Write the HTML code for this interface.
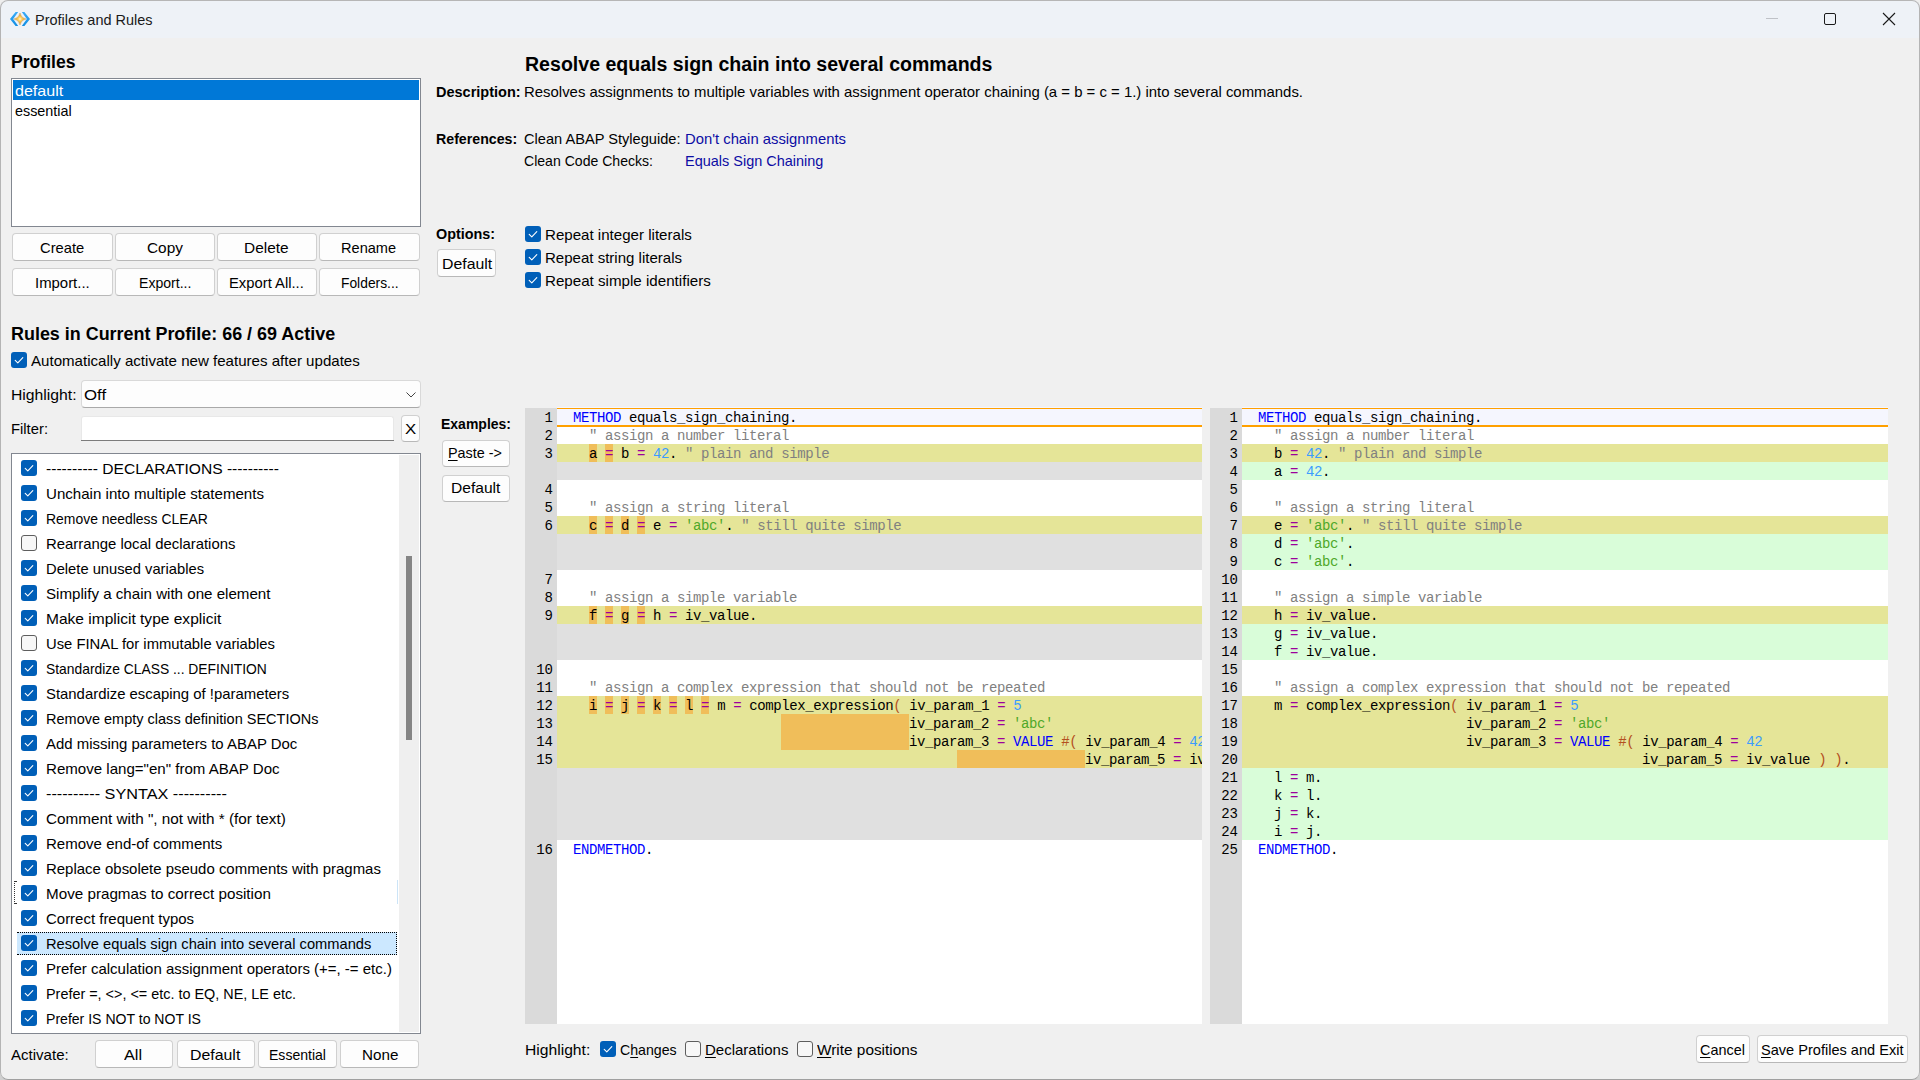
<!DOCTYPE html><html><head><meta charset="utf-8"><title>Profiles and Rules</title><style>
*{margin:0;padding:0;box-sizing:border-box}
html,body{width:1920px;height:1080px;overflow:hidden;background:linear-gradient(#eeeeee 0,#eeeeee 540px,#d0d0d0 540px)}
#win{position:absolute;left:0;top:0;width:1920px;height:1080px;border-radius:8px;overflow:hidden;background:#f0f0f0}
body{position:relative;font-family:"Liberation Sans", sans-serif;font-size:15px;color:#000}
.t{position:absolute;white-space:pre;line-height:20px}
.m{position:absolute;white-space:pre;line-height:20px;font-family:"Liberation Mono", monospace;font-size:14px;letter-spacing:-0.4px}
.btn{position:absolute;background:#fdfdfd;border:1px solid #d0d0d0;border-bottom-color:#b8b8b8;border-radius:4px}
.cb{position:absolute;width:16px;height:16px;border-radius:3px}
.cb.on{background:#005fb8}
.cb.off{background:#f7f7f7;border:1px solid #5e5e5e}
u{text-decoration:underline;text-underline-offset:2px}
</style></head><body>
<div id="win">
<div style="position:absolute;left:0px;top:0px;width:1920px;height:38px;background:#eef2f7;"></div>
<svg width="40" height="40" viewBox="0 0 40 40" style="position:absolute;left:0;top:0">
<defs><linearGradient id="chv" x1="0" y1="0" x2="0" y2="1"><stop offset="0" stop-color="#3aabf8"/><stop offset="1" stop-color="#128ee2"/></linearGradient>
<radialGradient id="star" cx="0.5" cy="0.5" r="0.5"><stop offset="0" stop-color="#fff8e0"/><stop offset="0.3" stop-color="#ffd060"/><stop offset="0.75" stop-color="#e8a020"/><stop offset="1" stop-color="#a87838"/></radialGradient></defs>
<polygon points="15.6,12 18.2,12 13.2,19 18.2,26 15.6,26 10,19" fill="url(#chv)"/>
<polygon points="24.4,12 21.8,12 26.8,19 21.8,26 24.4,26 30,19" fill="url(#chv)"/>
<path d="M20 13 Q21 18 26 19 Q21 20 20 25 Q19 20 14 19 Q19 18 20 13 Z" fill="url(#star)" stroke="#b98a3e" stroke-width="0.5" stroke-opacity="0.7"/>
</svg>
<div class="t " style="left:34.5px;top:10px;color:#1a1a1a;transform:scaleX(0.966);transform-origin:0 0;">Profiles and Rules</div>
<div style="position:absolute;left:1766px;top:18px;width:12px;height:1px;background:#bfc2c7;"></div>
<div style="position:absolute;left:1824px;top:13px;width:12px;height:12px;border:1.2px solid #1a1a1a;border-radius:2px;"></div>
<svg width="14" height="14" viewBox="0 0 14 14" style="position:absolute;left:1882px;top:12px"><path d="M1 1 L13 13 M13 1 L1 13" stroke="#1a1a1a" stroke-width="1.1"/></svg>
<div class="t " style="left:11px;top:52px;font-size:18px;font-weight:bold;transform:scaleX(0.9768);transform-origin:0 0;">Profiles</div>
<div style="position:absolute;left:11px;top:78px;width:410px;height:149px;background:#fff;border:1px solid #828790;"></div>
<div style="position:absolute;left:13px;top:80px;width:406px;height:20px;background:#0078d7;"></div>
<div class="t " style="left:14.5px;top:81px;color:#fff;transform:scaleX(1.07);transform-origin:0 0;">default</div>
<div class="t " style="left:14.5px;top:101px;transform:scaleX(0.9577);transform-origin:0 0;">essential</div>
<div class="btn" style="left:12px;top:233px;width:101px;height:28px"></div>
<div class="t " style="left:39.8px;top:238px;transform:scaleX(0.9838);transform-origin:0 0;">Create</div>
<div class="btn" style="left:115px;top:233px;width:100px;height:28px"></div>
<div class="t " style="left:146.8px;top:238px;transform:scaleX(1.0248);transform-origin:0 0;">Copy</div>
<div class="btn" style="left:217px;top:233px;width:100px;height:28px"></div>
<div class="t " style="left:244.2px;top:238px;transform:scaleX(1.0286);transform-origin:0 0;">Delete</div>
<div class="btn" style="left:319px;top:233px;width:101px;height:28px"></div>
<div class="t " style="left:341.2px;top:238px;transform:scaleX(0.9717);transform-origin:0 0;">Rename</div>
<div class="btn" style="left:12px;top:268px;width:101px;height:28px"></div>
<div class="t " style="left:34.5px;top:273px;transform:scaleX(0.9943);transform-origin:0 0;">Import...</div>
<div class="btn" style="left:115px;top:268px;width:100px;height:28px"></div>
<div class="t " style="left:138.8px;top:273px;transform:scaleX(0.9381);transform-origin:0 0;">Export...</div>
<div class="btn" style="left:217px;top:268px;width:100px;height:28px"></div>
<div class="t " style="left:229.3px;top:273px;transform:scaleX(0.9858);transform-origin:0 0;">Export All...</div>
<div class="btn" style="left:319px;top:268px;width:101px;height:28px"></div>
<div class="t " style="left:340.5px;top:273px;transform:scaleX(0.9211);transform-origin:0 0;">Folders...</div>
<div class="t " style="left:11px;top:324px;font-size:18px;font-weight:bold;transform:scaleX(0.9959);transform-origin:0 0;">Rules in Current Profile: 66 / 69 Active</div>
<div class="cb on" style="left:11px;top:352px"><svg width="16" height="16" viewBox="0 0 16 16" style="position:absolute;left:0;top:0"><path d="M4.2 8.3 L6.8 10.8 L11.8 5.6" fill="none" stroke="#fff" stroke-width="1.1" stroke-linecap="round" stroke-linejoin="round"/></svg></div>
<div class="t " style="left:30.5px;top:351px;transform:scaleX(1.006);transform-origin:0 0;">Automatically activate new features after updates</div>
<div class="t " style="left:10.5px;top:385px;transform:scaleX(1.0488);transform-origin:0 0;">Highlight:</div>
<div style="position:absolute;left:81px;top:380px;width:340px;height:28px;background:#fdfdfd;border:1px solid #d9d9d9;border-bottom-color:#a9a9a9;border-radius:4px;"></div>
<div class="t " style="left:84.3px;top:385px;transform:scaleX(1.1199);transform-origin:0 0;">Off</div>
<svg width="12" height="8" viewBox="0 0 12 8" style="position:absolute;left:405px;top:391px"><path d="M1.5 1.5 L6 6 L10.5 1.5" fill="none" stroke="#444" stroke-width="1"/></svg>
<div class="t " style="left:10.5px;top:419px;transform:scaleX(0.9867);transform-origin:0 0;">Filter:</div>
<div style="position:absolute;left:81px;top:416px;width:313px;height:25px;background:#fff;border:1px solid #e8e8e8;border-bottom:none;border-radius:3px 3px 0 0;"></div>
<div style="position:absolute;left:81px;top:440px;width:313px;height:1px;background:#7c7c7c;"></div>
<div class="btn" style="left:401px;top:415px;width:19px;height:27px"></div>
<div class="t " style="left:404.6px;top:419px;transform:scaleX(1.1183);transform-origin:0 0;">X</div>
<div style="position:absolute;left:11px;top:453px;width:410px;height:581px;background:#fff;border:1px solid #828790;"></div>
<div style="position:absolute;left:399px;top:455px;width:20px;height:577px;background:#efefef;"></div>
<div style="position:absolute;left:406px;top:556px;width:6px;height:184px;background:#858585;"></div>
<div style="position:absolute;left:17px;top:932px;width:380px;height:23px;background:#cce8ff;border:1px dotted #000;border-left:none;"></div>
<div style="position:absolute;left:14px;top:881px;width:2px;height:23px;border-left:1px dotted #333;border-top:1px dotted #333;border-bottom:1px dotted #333;"></div>
<div style="position:absolute;left:397px;top:880px;width:1px;height:24px;background:#cce4f7;"></div>
<div class="cb on" style="left:21px;top:460px"><svg width="16" height="16" viewBox="0 0 16 16" style="position:absolute;left:0;top:0"><path d="M4.2 8.3 L6.8 10.8 L11.8 5.6" fill="none" stroke="#fff" stroke-width="1.1" stroke-linecap="round" stroke-linejoin="round"/></svg></div>
<div class="t " style="left:46px;top:459px;transform:scaleX(1.0405);transform-origin:0 0;">---------- DECLARATIONS ----------</div>
<div class="cb on" style="left:21px;top:485px"><svg width="16" height="16" viewBox="0 0 16 16" style="position:absolute;left:0;top:0"><path d="M4.2 8.3 L6.8 10.8 L11.8 5.6" fill="none" stroke="#fff" stroke-width="1.1" stroke-linecap="round" stroke-linejoin="round"/></svg></div>
<div class="t " style="left:46px;top:484px;transform:scaleX(1.0056);transform-origin:0 0;">Unchain into multiple statements</div>
<div class="cb on" style="left:21px;top:510px"><svg width="16" height="16" viewBox="0 0 16 16" style="position:absolute;left:0;top:0"><path d="M4.2 8.3 L6.8 10.8 L11.8 5.6" fill="none" stroke="#fff" stroke-width="1.1" stroke-linecap="round" stroke-linejoin="round"/></svg></div>
<div class="t " style="left:46px;top:509px;transform:scaleX(0.929);transform-origin:0 0;">Remove needless CLEAR</div>
<div class="cb off" style="left:21px;top:535px"></div>
<div class="t " style="left:46px;top:534px;transform:scaleX(0.9919);transform-origin:0 0;">Rearrange local declarations</div>
<div class="cb on" style="left:21px;top:560px"><svg width="16" height="16" viewBox="0 0 16 16" style="position:absolute;left:0;top:0"><path d="M4.2 8.3 L6.8 10.8 L11.8 5.6" fill="none" stroke="#fff" stroke-width="1.1" stroke-linecap="round" stroke-linejoin="round"/></svg></div>
<div class="t " style="left:46px;top:559px;transform:scaleX(0.9817);transform-origin:0 0;">Delete unused variables</div>
<div class="cb on" style="left:21px;top:585px"><svg width="16" height="16" viewBox="0 0 16 16" style="position:absolute;left:0;top:0"><path d="M4.2 8.3 L6.8 10.8 L11.8 5.6" fill="none" stroke="#fff" stroke-width="1.1" stroke-linecap="round" stroke-linejoin="round"/></svg></div>
<div class="t " style="left:46px;top:584px;transform:scaleX(1.0084);transform-origin:0 0;">Simplify a chain with one element</div>
<div class="cb on" style="left:21px;top:610px"><svg width="16" height="16" viewBox="0 0 16 16" style="position:absolute;left:0;top:0"><path d="M4.2 8.3 L6.8 10.8 L11.8 5.6" fill="none" stroke="#fff" stroke-width="1.1" stroke-linecap="round" stroke-linejoin="round"/></svg></div>
<div class="t " style="left:46px;top:609px;transform:scaleX(1.0353);transform-origin:0 0;">Make implicit type explicit</div>
<div class="cb off" style="left:21px;top:635px"></div>
<div class="t " style="left:46px;top:634px;transform:scaleX(0.9869);transform-origin:0 0;">Use FINAL for immutable variables</div>
<div class="cb on" style="left:21px;top:660px"><svg width="16" height="16" viewBox="0 0 16 16" style="position:absolute;left:0;top:0"><path d="M4.2 8.3 L6.8 10.8 L11.8 5.6" fill="none" stroke="#fff" stroke-width="1.1" stroke-linecap="round" stroke-linejoin="round"/></svg></div>
<div class="t " style="left:46px;top:659px;transform:scaleX(0.9229);transform-origin:0 0;">Standardize CLASS ... DEFINITION</div>
<div class="cb on" style="left:21px;top:685px"><svg width="16" height="16" viewBox="0 0 16 16" style="position:absolute;left:0;top:0"><path d="M4.2 8.3 L6.8 10.8 L11.8 5.6" fill="none" stroke="#fff" stroke-width="1.1" stroke-linecap="round" stroke-linejoin="round"/></svg></div>
<div class="t " style="left:46px;top:684px;transform:scaleX(0.9922);transform-origin:0 0;">Standardize escaping of !parameters</div>
<div class="cb on" style="left:21px;top:710px"><svg width="16" height="16" viewBox="0 0 16 16" style="position:absolute;left:0;top:0"><path d="M4.2 8.3 L6.8 10.8 L11.8 5.6" fill="none" stroke="#fff" stroke-width="1.1" stroke-linecap="round" stroke-linejoin="round"/></svg></div>
<div class="t " style="left:46px;top:709px;transform:scaleX(0.9671);transform-origin:0 0;">Remove empty class definition SECTIONs</div>
<div class="cb on" style="left:21px;top:735px"><svg width="16" height="16" viewBox="0 0 16 16" style="position:absolute;left:0;top:0"><path d="M4.2 8.3 L6.8 10.8 L11.8 5.6" fill="none" stroke="#fff" stroke-width="1.1" stroke-linecap="round" stroke-linejoin="round"/></svg></div>
<div class="t " style="left:46px;top:734px;transform:scaleX(0.9959);transform-origin:0 0;">Add missing parameters to ABAP Doc</div>
<div class="cb on" style="left:21px;top:760px"><svg width="16" height="16" viewBox="0 0 16 16" style="position:absolute;left:0;top:0"><path d="M4.2 8.3 L6.8 10.8 L11.8 5.6" fill="none" stroke="#fff" stroke-width="1.1" stroke-linecap="round" stroke-linejoin="round"/></svg></div>
<div class="t " style="left:46px;top:759px;transform:scaleX(1.0044);transform-origin:0 0;">Remove lang="en" from ABAP Doc</div>
<div class="cb on" style="left:21px;top:785px"><svg width="16" height="16" viewBox="0 0 16 16" style="position:absolute;left:0;top:0"><path d="M4.2 8.3 L6.8 10.8 L11.8 5.6" fill="none" stroke="#fff" stroke-width="1.1" stroke-linecap="round" stroke-linejoin="round"/></svg></div>
<div class="t " style="left:46px;top:784px;transform:scaleX(1.0823);transform-origin:0 0;">---------- SYNTAX ----------</div>
<div class="cb on" style="left:21px;top:810px"><svg width="16" height="16" viewBox="0 0 16 16" style="position:absolute;left:0;top:0"><path d="M4.2 8.3 L6.8 10.8 L11.8 5.6" fill="none" stroke="#fff" stroke-width="1.1" stroke-linecap="round" stroke-linejoin="round"/></svg></div>
<div class="t " style="left:46px;top:809px;transform:scaleX(1.0187);transform-origin:0 0;">Comment with ", not with * (for text)</div>
<div class="cb on" style="left:21px;top:835px"><svg width="16" height="16" viewBox="0 0 16 16" style="position:absolute;left:0;top:0"><path d="M4.2 8.3 L6.8 10.8 L11.8 5.6" fill="none" stroke="#fff" stroke-width="1.1" stroke-linecap="round" stroke-linejoin="round"/></svg></div>
<div class="t " style="left:46px;top:834px;transform:scaleX(1.0022);transform-origin:0 0;">Remove end-of comments</div>
<div class="cb on" style="left:21px;top:860px"><svg width="16" height="16" viewBox="0 0 16 16" style="position:absolute;left:0;top:0"><path d="M4.2 8.3 L6.8 10.8 L11.8 5.6" fill="none" stroke="#fff" stroke-width="1.1" stroke-linecap="round" stroke-linejoin="round"/></svg></div>
<div class="t " style="left:46px;top:859px;transform:scaleX(0.9967);transform-origin:0 0;">Replace obsolete pseudo comments with pragmas</div>
<div class="cb on" style="left:21px;top:885px"><svg width="16" height="16" viewBox="0 0 16 16" style="position:absolute;left:0;top:0"><path d="M4.2 8.3 L6.8 10.8 L11.8 5.6" fill="none" stroke="#fff" stroke-width="1.1" stroke-linecap="round" stroke-linejoin="round"/></svg></div>
<div class="t " style="left:46px;top:884px;transform:scaleX(1.0141);transform-origin:0 0;">Move pragmas to correct position</div>
<div class="cb on" style="left:21px;top:910px"><svg width="16" height="16" viewBox="0 0 16 16" style="position:absolute;left:0;top:0"><path d="M4.2 8.3 L6.8 10.8 L11.8 5.6" fill="none" stroke="#fff" stroke-width="1.1" stroke-linecap="round" stroke-linejoin="round"/></svg></div>
<div class="t " style="left:46px;top:909px;transform:scaleX(0.9979);transform-origin:0 0;">Correct frequent typos</div>
<div class="cb on" style="left:21px;top:935px"><svg width="16" height="16" viewBox="0 0 16 16" style="position:absolute;left:0;top:0"><path d="M4.2 8.3 L6.8 10.8 L11.8 5.6" fill="none" stroke="#fff" stroke-width="1.1" stroke-linecap="round" stroke-linejoin="round"/></svg></div>
<div class="t " style="left:46px;top:934px;transform:scaleX(0.9778);transform-origin:0 0;">Resolve equals sign chain into several commands</div>
<div class="cb on" style="left:21px;top:960px"><svg width="16" height="16" viewBox="0 0 16 16" style="position:absolute;left:0;top:0"><path d="M4.2 8.3 L6.8 10.8 L11.8 5.6" fill="none" stroke="#fff" stroke-width="1.1" stroke-linecap="round" stroke-linejoin="round"/></svg></div>
<div class="t " style="left:46px;top:959px;transform:scaleX(0.9985);transform-origin:0 0;">Prefer calculation assignment operators (+=, -= etc.)</div>
<div class="cb on" style="left:21px;top:985px"><svg width="16" height="16" viewBox="0 0 16 16" style="position:absolute;left:0;top:0"><path d="M4.2 8.3 L6.8 10.8 L11.8 5.6" fill="none" stroke="#fff" stroke-width="1.1" stroke-linecap="round" stroke-linejoin="round"/></svg></div>
<div class="t " style="left:46px;top:984px;transform:scaleX(0.9599);transform-origin:0 0;">Prefer =, &lt;&gt;, &lt;= etc. to EQ, NE, LE etc.</div>
<div class="cb on" style="left:21px;top:1010px"><svg width="16" height="16" viewBox="0 0 16 16" style="position:absolute;left:0;top:0"><path d="M4.2 8.3 L6.8 10.8 L11.8 5.6" fill="none" stroke="#fff" stroke-width="1.1" stroke-linecap="round" stroke-linejoin="round"/></svg></div>
<div class="t " style="left:46px;top:1009px;transform:scaleX(0.9375);transform-origin:0 0;">Prefer IS NOT to NOT IS</div>
<div class="t " style="left:10.5px;top:1045px;transform:scaleX(1.0029);transform-origin:0 0;">Activate:</div>
<div class="btn" style="left:95px;top:1040px;width:78px;height:28px"></div>
<div class="t " style="left:124.4px;top:1045px;transform:scaleX(1.0857);transform-origin:0 0;">All</div>
<div class="btn" style="left:177px;top:1040px;width:78px;height:28px"></div>
<div class="t " style="left:190.2px;top:1045px;transform:scaleX(1.0583);transform-origin:0 0;">Default</div>
<div class="btn" style="left:258px;top:1040px;width:79px;height:28px"></div>
<div class="t " style="left:268.5px;top:1045px;transform:scaleX(0.9363);transform-origin:0 0;">Essential</div>
<div class="btn" style="left:340px;top:1040px;width:79px;height:28px"></div>
<div class="t " style="left:361.7px;top:1045px;transform:scaleX(1.0151);transform-origin:0 0;">None</div>
<div class="t " style="left:525px;top:54px;font-size:19.5px;font-weight:bold;transform:scaleX(1.003);transform-origin:0 0;">Resolve equals sign chain into several commands</div>
<div class="t " style="left:435.5px;top:82px;font-weight:bold;transform:scaleX(0.9667);transform-origin:0 0;">Description:</div>
<div class="t " style="left:524px;top:82px;transform:scaleX(0.9945);transform-origin:0 0;">Resolves assignments to multiple variables with assignment operator chaining (a = b = c = 1.) into several commands.</div>
<div class="t " style="left:435.5px;top:129px;font-weight:bold;transform:scaleX(0.946);transform-origin:0 0;">References:</div>
<div class="t " style="left:524.3px;top:129px;transform:scaleX(0.974);transform-origin:0 0;">Clean ABAP Styleguide:</div>
<div class="t " style="left:684.6px;top:129px;color:#0c0ca4;transform:scaleX(0.9874);transform-origin:0 0;">Don't chain assignments</div>
<div class="t " style="left:524.3px;top:151px;transform:scaleX(0.9376);transform-origin:0 0;">Clean Code Checks:</div>
<div class="t " style="left:684.6px;top:151px;color:#0c0ca4;transform:scaleX(0.9649);transform-origin:0 0;">Equals Sign Chaining</div>
<div class="t " style="left:436px;top:224px;font-weight:bold;transform:scaleX(0.9585);transform-origin:0 0;">Options:</div>
<div class="btn" style="left:437px;top:249px;width:59px;height:28px"></div>
<div class="t " style="left:441.5px;top:254px;transform:scaleX(1.0572);transform-origin:0 0;">Default</div>
<div class="cb on" style="left:525px;top:226px"><svg width="16" height="16" viewBox="0 0 16 16" style="position:absolute;left:0;top:0"><path d="M4.2 8.3 L6.8 10.8 L11.8 5.6" fill="none" stroke="#fff" stroke-width="1.1" stroke-linecap="round" stroke-linejoin="round"/></svg></div>
<div class="t " style="left:544.5px;top:225px;transform:scaleX(1.006);transform-origin:0 0;">Repeat integer literals</div>
<div class="cb on" style="left:525px;top:249px"><svg width="16" height="16" viewBox="0 0 16 16" style="position:absolute;left:0;top:0"><path d="M4.2 8.3 L6.8 10.8 L11.8 5.6" fill="none" stroke="#fff" stroke-width="1.1" stroke-linecap="round" stroke-linejoin="round"/></svg></div>
<div class="t " style="left:544.5px;top:248px;transform:scaleX(1.0019);transform-origin:0 0;">Repeat string literals</div>
<div class="cb on" style="left:525px;top:272px"><svg width="16" height="16" viewBox="0 0 16 16" style="position:absolute;left:0;top:0"><path d="M4.2 8.3 L6.8 10.8 L11.8 5.6" fill="none" stroke="#fff" stroke-width="1.1" stroke-linecap="round" stroke-linejoin="round"/></svg></div>
<div class="t " style="left:544.5px;top:271px;transform:scaleX(1.0094);transform-origin:0 0;">Repeat simple identifiers</div>
<div class="t " style="left:440.8px;top:414px;font-weight:bold;transform:scaleX(0.9328);transform-origin:0 0;">Examples:</div>
<div class="btn" style="left:442px;top:440px;width:68px;height:27px"></div>
<div class="t " style="left:448.4px;top:443px;transform:scaleX(0.9592);transform-origin:0 0;"><u>P</u>aste -&gt;</div>
<div class="btn" style="left:442px;top:475px;width:68px;height:27px"></div>
<div class="t " style="left:451px;top:478px;transform:scaleX(1.0393);transform-origin:0 0;">Default</div>
<div style="position:absolute;left:0;top:0;width:1202px;height:1080px;overflow:hidden">
<div style="position:absolute;left:525px;top:408px;width:677px;height:616px;background:#fff;"></div>
<div style="position:absolute;left:525px;top:408px;width:32px;height:616px;background:#dadada;"></div>
<div style="position:absolute;left:557px;top:407px;width:645px;height:19px;background:#f5f6fe;"></div>
<div style="position:absolute;left:557px;top:444px;width:645px;height:18px;background:#e5e598;"></div>
<div style="position:absolute;left:557px;top:462px;width:645px;height:18px;background:#e0e0e0;"></div>
<div style="position:absolute;left:557px;top:516px;width:645px;height:18px;background:#e5e598;"></div>
<div style="position:absolute;left:557px;top:534px;width:645px;height:18px;background:#e0e0e0;"></div>
<div style="position:absolute;left:557px;top:552px;width:645px;height:18px;background:#e0e0e0;"></div>
<div style="position:absolute;left:557px;top:606px;width:645px;height:18px;background:#e5e598;"></div>
<div style="position:absolute;left:557px;top:624px;width:645px;height:18px;background:#e0e0e0;"></div>
<div style="position:absolute;left:557px;top:642px;width:645px;height:18px;background:#e0e0e0;"></div>
<div style="position:absolute;left:557px;top:696px;width:645px;height:18px;background:#e5e598;"></div>
<div style="position:absolute;left:557px;top:714px;width:645px;height:18px;background:#e5e598;"></div>
<div style="position:absolute;left:557px;top:732px;width:645px;height:18px;background:#e5e598;"></div>
<div style="position:absolute;left:557px;top:750px;width:645px;height:18px;background:#e5e598;"></div>
<div style="position:absolute;left:557px;top:768px;width:645px;height:18px;background:#e0e0e0;"></div>
<div style="position:absolute;left:557px;top:786px;width:645px;height:18px;background:#e0e0e0;"></div>
<div style="position:absolute;left:557px;top:804px;width:645px;height:18px;background:#e0e0e0;"></div>
<div style="position:absolute;left:557px;top:822px;width:645px;height:18px;background:#e0e0e0;"></div>
<div style="position:absolute;left:589px;top:444px;width:8px;height:18px;background:#f0be5a;"></div>
<div style="position:absolute;left:605px;top:444px;width:8px;height:18px;background:#f0be5a;"></div>
<div style="position:absolute;left:589px;top:516px;width:8px;height:18px;background:#f0be5a;"></div>
<div style="position:absolute;left:605px;top:516px;width:8px;height:18px;background:#f0be5a;"></div>
<div style="position:absolute;left:621px;top:516px;width:8px;height:18px;background:#f0be5a;"></div>
<div style="position:absolute;left:637px;top:516px;width:8px;height:18px;background:#f0be5a;"></div>
<div style="position:absolute;left:589px;top:606px;width:8px;height:18px;background:#f0be5a;"></div>
<div style="position:absolute;left:605px;top:606px;width:8px;height:18px;background:#f0be5a;"></div>
<div style="position:absolute;left:621px;top:606px;width:8px;height:18px;background:#f0be5a;"></div>
<div style="position:absolute;left:637px;top:606px;width:8px;height:18px;background:#f0be5a;"></div>
<div style="position:absolute;left:589px;top:696px;width:8px;height:18px;background:#f0be5a;"></div>
<div style="position:absolute;left:605px;top:696px;width:8px;height:18px;background:#f0be5a;"></div>
<div style="position:absolute;left:621px;top:696px;width:8px;height:18px;background:#f0be5a;"></div>
<div style="position:absolute;left:637px;top:696px;width:8px;height:18px;background:#f0be5a;"></div>
<div style="position:absolute;left:653px;top:696px;width:8px;height:18px;background:#f0be5a;"></div>
<div style="position:absolute;left:669px;top:696px;width:8px;height:18px;background:#f0be5a;"></div>
<div style="position:absolute;left:685px;top:696px;width:8px;height:18px;background:#f0be5a;"></div>
<div style="position:absolute;left:701px;top:696px;width:8px;height:18px;background:#f0be5a;"></div>
<div style="position:absolute;left:781px;top:714px;width:128px;height:36px;background:#f0be5a;"></div>
<div style="position:absolute;left:957px;top:750px;width:128px;height:18px;background:#f0be5a;"></div>
<div class="m" style="left:525px;top:408px;width:28px;text-align:right;letter-spacing:0;">1</div>
<div class="m" style="left:573px;top:408px;"><span style="color:#0000ff">METHOD</span> equals_sign_chaining.</div>
<div class="m" style="left:525px;top:426px;width:28px;text-align:right;letter-spacing:0;">2</div>
<div class="m" style="left:573px;top:426px;">  <span style="color:#808080">" assign a number literal</span></div>
<div class="m" style="left:525px;top:444px;width:28px;text-align:right;letter-spacing:0;">3</div>
<div class="m" style="left:573px;top:444px;">  a <span style="color:#9c009c">=</span> b <span style="color:#9c009c">=</span> <span style="color:#3c9cff">42</span>. <span style="color:#808080">" plain and simple</span></div>
<div class="m" style="left:525px;top:480px;width:28px;text-align:right;letter-spacing:0;">4</div>
<div class="m" style="left:525px;top:498px;width:28px;text-align:right;letter-spacing:0;">5</div>
<div class="m" style="left:573px;top:498px;">  <span style="color:#808080">" assign a string literal</span></div>
<div class="m" style="left:525px;top:516px;width:28px;text-align:right;letter-spacing:0;">6</div>
<div class="m" style="left:573px;top:516px;">  c <span style="color:#9c009c">=</span> d <span style="color:#9c009c">=</span> e <span style="color:#9c009c">=</span> <span style="color:#4fa82a">'abc'</span>. <span style="color:#808080">" still quite simple</span></div>
<div class="m" style="left:525px;top:570px;width:28px;text-align:right;letter-spacing:0;">7</div>
<div class="m" style="left:525px;top:588px;width:28px;text-align:right;letter-spacing:0;">8</div>
<div class="m" style="left:573px;top:588px;">  <span style="color:#808080">" assign a simple variable</span></div>
<div class="m" style="left:525px;top:606px;width:28px;text-align:right;letter-spacing:0;">9</div>
<div class="m" style="left:573px;top:606px;">  f <span style="color:#9c009c">=</span> g <span style="color:#9c009c">=</span> h <span style="color:#9c009c">=</span> iv_value.</div>
<div class="m" style="left:525px;top:660px;width:28px;text-align:right;letter-spacing:0;">10</div>
<div class="m" style="left:525px;top:678px;width:28px;text-align:right;letter-spacing:0;">11</div>
<div class="m" style="left:573px;top:678px;">  <span style="color:#808080">" assign a complex expression that should not be repeated</span></div>
<div class="m" style="left:525px;top:696px;width:28px;text-align:right;letter-spacing:0;">12</div>
<div class="m" style="left:573px;top:696px;">  i <span style="color:#9c009c">=</span> j <span style="color:#9c009c">=</span> k <span style="color:#9c009c">=</span> l <span style="color:#9c009c">=</span> m <span style="color:#9c009c">=</span> complex_expression<span style="color:#b4501e">(</span> iv_param_1 <span style="color:#9c009c">=</span> <span style="color:#3c9cff">5</span></div>
<div class="m" style="left:525px;top:714px;width:28px;text-align:right;letter-spacing:0;">13</div>
<div class="m" style="left:573px;top:714px;">                                          iv_param_2 <span style="color:#9c009c">=</span> <span style="color:#4fa82a">'abc'</span></div>
<div class="m" style="left:525px;top:732px;width:28px;text-align:right;letter-spacing:0;">14</div>
<div class="m" style="left:573px;top:732px;">                                          iv_param_3 <span style="color:#9c009c">=</span> <span style="color:#0000ff">VALUE</span> <span style="color:#b4501e">#</span><span style="color:#b4501e">(</span> iv_param_4 <span style="color:#9c009c">=</span> <span style="color:#3c9cff">42</span></div>
<div class="m" style="left:525px;top:750px;width:28px;text-align:right;letter-spacing:0;">15</div>
<div class="m" style="left:573px;top:750px;">                                                                iv_param_5 <span style="color:#9c009c">=</span> iv_value <span style="color:#b4501e">)</span> <span style="color:#b4501e">)</span>.</div>
<div class="m" style="left:525px;top:840px;width:28px;text-align:right;letter-spacing:0;">16</div>
<div class="m" style="left:573px;top:840px;"><span style="color:#0000ff">ENDMETHOD</span>.</div>
<div style="position:absolute;left:557px;top:408px;width:645px;height:1px;background:#ffa000;"></div>
<div style="position:absolute;left:557px;top:425px;width:645px;height:2px;background:#ffa000;"></div>
</div>
<div style="position:absolute;left:0;top:0;width:1888px;height:1080px;overflow:hidden">
<div style="position:absolute;left:1210px;top:408px;width:678px;height:616px;background:#fff;"></div>
<div style="position:absolute;left:1210px;top:408px;width:32px;height:616px;background:#dadada;"></div>
<div style="position:absolute;left:1242px;top:407px;width:646px;height:19px;background:#f5f6fe;"></div>
<div style="position:absolute;left:1242px;top:444px;width:646px;height:18px;background:#e5e598;"></div>
<div style="position:absolute;left:1242px;top:462px;width:646px;height:18px;background:#d9fdd9;"></div>
<div style="position:absolute;left:1242px;top:516px;width:646px;height:18px;background:#e5e598;"></div>
<div style="position:absolute;left:1242px;top:534px;width:646px;height:18px;background:#d9fdd9;"></div>
<div style="position:absolute;left:1242px;top:552px;width:646px;height:18px;background:#d9fdd9;"></div>
<div style="position:absolute;left:1242px;top:606px;width:646px;height:18px;background:#e5e598;"></div>
<div style="position:absolute;left:1242px;top:624px;width:646px;height:18px;background:#d9fdd9;"></div>
<div style="position:absolute;left:1242px;top:642px;width:646px;height:18px;background:#d9fdd9;"></div>
<div style="position:absolute;left:1242px;top:696px;width:646px;height:18px;background:#e5e598;"></div>
<div style="position:absolute;left:1242px;top:714px;width:646px;height:18px;background:#e5e598;"></div>
<div style="position:absolute;left:1242px;top:732px;width:646px;height:18px;background:#e5e598;"></div>
<div style="position:absolute;left:1242px;top:750px;width:646px;height:18px;background:#e5e598;"></div>
<div style="position:absolute;left:1242px;top:768px;width:646px;height:18px;background:#d9fdd9;"></div>
<div style="position:absolute;left:1242px;top:786px;width:646px;height:18px;background:#d9fdd9;"></div>
<div style="position:absolute;left:1242px;top:804px;width:646px;height:18px;background:#d9fdd9;"></div>
<div style="position:absolute;left:1242px;top:822px;width:646px;height:18px;background:#d9fdd9;"></div>
<div class="m" style="left:1210px;top:408px;width:28px;text-align:right;letter-spacing:0;">1</div>
<div class="m" style="left:1258px;top:408px;"><span style="color:#0000ff">METHOD</span> equals_sign_chaining.</div>
<div class="m" style="left:1210px;top:426px;width:28px;text-align:right;letter-spacing:0;">2</div>
<div class="m" style="left:1258px;top:426px;">  <span style="color:#808080">" assign a number literal</span></div>
<div class="m" style="left:1210px;top:444px;width:28px;text-align:right;letter-spacing:0;">3</div>
<div class="m" style="left:1258px;top:444px;">  b <span style="color:#9c009c">=</span> <span style="color:#3c9cff">42</span>. <span style="color:#808080">" plain and simple</span></div>
<div class="m" style="left:1210px;top:462px;width:28px;text-align:right;letter-spacing:0;">4</div>
<div class="m" style="left:1258px;top:462px;">  a <span style="color:#9c009c">=</span> <span style="color:#3c9cff">42</span>.</div>
<div class="m" style="left:1210px;top:480px;width:28px;text-align:right;letter-spacing:0;">5</div>
<div class="m" style="left:1210px;top:498px;width:28px;text-align:right;letter-spacing:0;">6</div>
<div class="m" style="left:1258px;top:498px;">  <span style="color:#808080">" assign a string literal</span></div>
<div class="m" style="left:1210px;top:516px;width:28px;text-align:right;letter-spacing:0;">7</div>
<div class="m" style="left:1258px;top:516px;">  e <span style="color:#9c009c">=</span> <span style="color:#4fa82a">'abc'</span>. <span style="color:#808080">" still quite simple</span></div>
<div class="m" style="left:1210px;top:534px;width:28px;text-align:right;letter-spacing:0;">8</div>
<div class="m" style="left:1258px;top:534px;">  d <span style="color:#9c009c">=</span> <span style="color:#4fa82a">'abc'</span>.</div>
<div class="m" style="left:1210px;top:552px;width:28px;text-align:right;letter-spacing:0;">9</div>
<div class="m" style="left:1258px;top:552px;">  c <span style="color:#9c009c">=</span> <span style="color:#4fa82a">'abc'</span>.</div>
<div class="m" style="left:1210px;top:570px;width:28px;text-align:right;letter-spacing:0;">10</div>
<div class="m" style="left:1210px;top:588px;width:28px;text-align:right;letter-spacing:0;">11</div>
<div class="m" style="left:1258px;top:588px;">  <span style="color:#808080">" assign a simple variable</span></div>
<div class="m" style="left:1210px;top:606px;width:28px;text-align:right;letter-spacing:0;">12</div>
<div class="m" style="left:1258px;top:606px;">  h <span style="color:#9c009c">=</span> iv_value.</div>
<div class="m" style="left:1210px;top:624px;width:28px;text-align:right;letter-spacing:0;">13</div>
<div class="m" style="left:1258px;top:624px;">  g <span style="color:#9c009c">=</span> iv_value.</div>
<div class="m" style="left:1210px;top:642px;width:28px;text-align:right;letter-spacing:0;">14</div>
<div class="m" style="left:1258px;top:642px;">  f <span style="color:#9c009c">=</span> iv_value.</div>
<div class="m" style="left:1210px;top:660px;width:28px;text-align:right;letter-spacing:0;">15</div>
<div class="m" style="left:1210px;top:678px;width:28px;text-align:right;letter-spacing:0;">16</div>
<div class="m" style="left:1258px;top:678px;">  <span style="color:#808080">" assign a complex expression that should not be repeated</span></div>
<div class="m" style="left:1210px;top:696px;width:28px;text-align:right;letter-spacing:0;">17</div>
<div class="m" style="left:1258px;top:696px;">  m <span style="color:#9c009c">=</span> complex_expression<span style="color:#b4501e">(</span> iv_param_1 <span style="color:#9c009c">=</span> <span style="color:#3c9cff">5</span></div>
<div class="m" style="left:1210px;top:714px;width:28px;text-align:right;letter-spacing:0;">18</div>
<div class="m" style="left:1258px;top:714px;">                          iv_param_2 <span style="color:#9c009c">=</span> <span style="color:#4fa82a">'abc'</span></div>
<div class="m" style="left:1210px;top:732px;width:28px;text-align:right;letter-spacing:0;">19</div>
<div class="m" style="left:1258px;top:732px;">                          iv_param_3 <span style="color:#9c009c">=</span> <span style="color:#0000ff">VALUE</span> <span style="color:#b4501e">#</span><span style="color:#b4501e">(</span> iv_param_4 <span style="color:#9c009c">=</span> <span style="color:#3c9cff">42</span></div>
<div class="m" style="left:1210px;top:750px;width:28px;text-align:right;letter-spacing:0;">20</div>
<div class="m" style="left:1258px;top:750px;">                                                iv_param_5 <span style="color:#9c009c">=</span> iv_value <span style="color:#b4501e">)</span> <span style="color:#b4501e">)</span>.</div>
<div class="m" style="left:1210px;top:768px;width:28px;text-align:right;letter-spacing:0;">21</div>
<div class="m" style="left:1258px;top:768px;">  l <span style="color:#9c009c">=</span> m.</div>
<div class="m" style="left:1210px;top:786px;width:28px;text-align:right;letter-spacing:0;">22</div>
<div class="m" style="left:1258px;top:786px;">  k <span style="color:#9c009c">=</span> l.</div>
<div class="m" style="left:1210px;top:804px;width:28px;text-align:right;letter-spacing:0;">23</div>
<div class="m" style="left:1258px;top:804px;">  j <span style="color:#9c009c">=</span> k.</div>
<div class="m" style="left:1210px;top:822px;width:28px;text-align:right;letter-spacing:0;">24</div>
<div class="m" style="left:1258px;top:822px;">  i <span style="color:#9c009c">=</span> j.</div>
<div class="m" style="left:1210px;top:840px;width:28px;text-align:right;letter-spacing:0;">25</div>
<div class="m" style="left:1258px;top:840px;"><span style="color:#0000ff">ENDMETHOD</span>.</div>
<div style="position:absolute;left:1242px;top:408px;width:646px;height:1px;background:#ffa000;"></div>
<div style="position:absolute;left:1242px;top:425px;width:646px;height:2px;background:#ffa000;"></div>
</div>
<div class="t " style="left:524.5px;top:1040px;transform:scaleX(1.044);transform-origin:0 0;">Highlight:</div>
<div class="cb on" style="left:600px;top:1041px"><svg width="16" height="16" viewBox="0 0 16 16" style="position:absolute;left:0;top:0"><path d="M4.2 8.3 L6.8 10.8 L11.8 5.6" fill="none" stroke="#fff" stroke-width="1.1" stroke-linecap="round" stroke-linejoin="round"/></svg></div>
<div class="t " style="left:619.5px;top:1040px;transform:scaleX(0.944);transform-origin:0 0;">C<u>h</u>anges</div>
<div class="cb off" style="left:685px;top:1041px"></div>
<div class="t " style="left:704.6px;top:1040px;transform:scaleX(1.0001);transform-origin:0 0;"><u>D</u>eclarations</div>
<div class="cb off" style="left:797px;top:1041px"></div>
<div class="t " style="left:816.5px;top:1040px;transform:scaleX(1.0244);transform-origin:0 0;"><u>W</u>rite positions</div>
<div class="btn" style="left:1696px;top:1035px;width:54px;height:28px"></div>
<div class="t " style="left:1700px;top:1040px;transform:scaleX(0.9614);transform-origin:0 0;"><u>C</u>ancel</div>
<div class="btn" style="left:1757px;top:1035px;width:151px;height:28px"></div>
<div class="t " style="left:1761px;top:1040px;transform:scaleX(0.9709);transform-origin:0 0;"><u>S</u>ave Profiles and Exit</div>
</div>
<div style="position:absolute;left:0;top:0;width:1920px;height:1080px;border:1px solid #b4b4b4;border-top-color:#b6b6b6;border-bottom-color:#a0a0a0;border-radius:8px;pointer-events:none"></div>
</body></html>
